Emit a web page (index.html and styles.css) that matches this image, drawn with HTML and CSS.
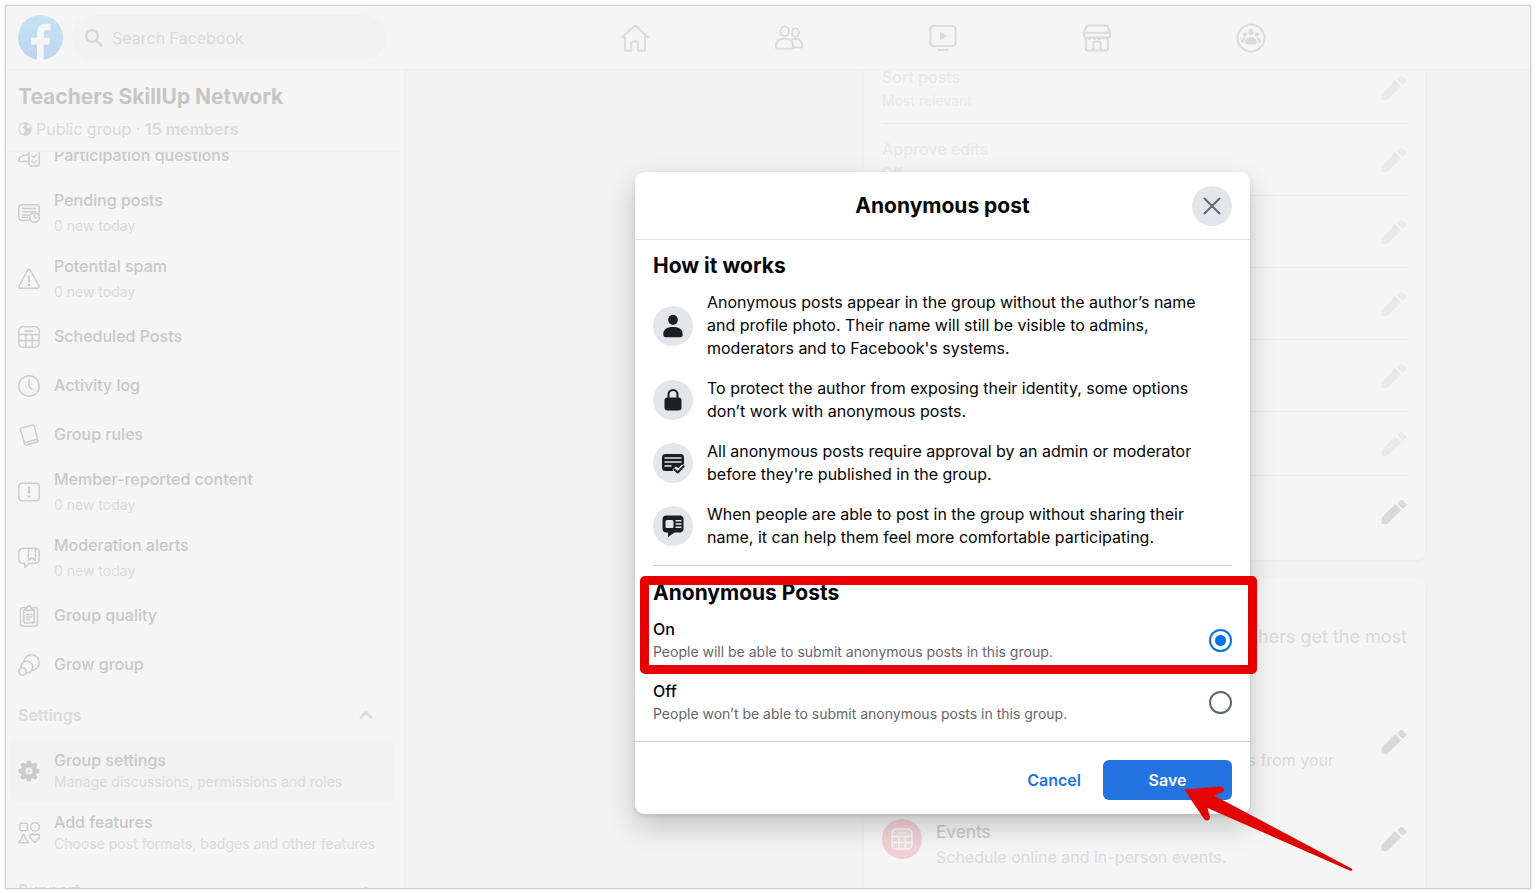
FILE: index.html
```html
<!DOCTYPE html>
<html lang="en">
<head>
  <meta charset="UTF-8">
  <meta name="viewport" content="width=device-width, initial-scale=1.0">
  <title>Group settings | Facebook</title>
  <link rel="stylesheet" href="styles.css">
</head>
<body>
  <!-- Shared icons -->
  <svg class="sprite" aria-hidden="true">
    <symbol id="pencil" viewBox="0 0 26 26">
      <path d="M.5 19.200 13.200 6a1.300 1.300 0 0 1 1.800 0l4.300 4.200a1.300 1.300 0 0 1 0 1.800L7 24.300c-.5.500-1 .7-1.700.7H1.500a1 1 0 0 1-1-1z"/>
      <path d="M17 3.500 19 1.400a2 2 0 0 1 2.800 0l3 3a2 2 0 0 1 0 2.800L22.700 9.300a1.200 1.200 0 0 1-1.700 0L17 5.200a1.200 1.200 0 0 1 0-1.700z"/>
    </symbol>
    <symbol id="chevron" viewBox="0 0 14 9">
      <path d="M2 7.300 7 2.500l5 4.800" fill="none" stroke="currentColor" stroke-width="2.800" stroke-linecap="round" stroke-linejoin="round"/>
    </symbol>
  </svg>

  <div class="window">
    <header class="topbar">
      <div class="brand">
        <a href="#" class="logo" aria-label="Facebook">
          <svg viewBox="0 0 45 45">
            <defs>
              <linearGradient id="fb" x1="0" y1="0" x2="0" y2="1">
                <stop offset="0" stop-color="#c5e4f4"/>
                <stop offset="1" stop-color="#c0d3f1"/>
              </linearGradient>
            </defs>
            <circle cx="22.500" cy="22.500" r="22.500" fill="url(#fb)"/>
            <path fill="#f5f5f5" d="M19 44.800V29.500h-6v-6.800h6v-4.500c0-6 3.500-9.500 9-9.500 1.700 0 3.200.1 4.600.4v5.800h-3c-3 0-3.800 1.600-3.800 3.500v4.300h6.400l-1.100 6.800h-5.300v15.300c-2.200.3-4.600.3-6.800 0z"/>
          </svg>
        </a>
        <label class="search">
          <svg viewBox="0 0 18 18"><circle cx="7" cy="7" r="5.800"/><path d="M11.500 11.500 16.500 16.500"/></svg>
          <input type="search" placeholder="Search Facebook" aria-label="Search Facebook">
        </label>
      </div>
      <nav class="tabs">
        <a href="#" aria-label="Home"><svg viewBox="0 0 28 28"><path d="M14 1.500 1 13h3v13a.8.8 0 0 0 .8.800h5.400V17.500h6.600v9.300h6.400a.8.8 0 0 0 .8-.800V13h3z"/></svg></a>
        <a href="#" aria-label="Friends"><svg viewBox="0 0 28 28"><ellipse cx="9.700" cy="7.300" rx="4.200" ry="4.900"/><ellipse cx="20.500" cy="8.500" rx="3.500" ry="4.200"/><path d="M1 22.500c0-5 3-8 8.500-8s8.700 3 8.700 8c0 1.500-.7 2.200-2 2.200H3c-1.300 0-2-.7-2-2.200zM17.500 23.500h7.800c1.200 0 1.900-.6 1.900-1.900 0-4.400-2.500-6.600-6.700-6.600-1.500 0-2.700.2-3.700.7"/></svg></a>
        <a href="#" aria-label="Watch"><svg viewBox="0 0 28 28"><rect x="1.500" y="2" width="25" height="20" rx="3"/><path d="M8.500 26h11"/><path class="solid" d="M11 7.800v8.400l7.500-4.200z"/></svg></a>
        <a href="#" aria-label="Marketplace"><svg viewBox="0 0 28 28"><path d="M4 1.500h20l3 6.500v3.500a2 2 0 0 1-2 2H3a2 2 0 0 1-2-2V8zM1 8.800h26M3 13.500v11.800c0 .8.500 1.200 1.200 1.200h19.600c.7 0 1.200-.4 1.200-1.200V13.500M10.500 26.500v-8c0-.7.4-1 1-1h5c.6 0 1 .3 1 1v8M4 13.500l2.500 1.500 2.500-1.500 2.500 1.500 2.500-1.500 2.500 1.500 2.500-1.500 2.500 1.500 2.500-1.500"/></svg></a>
        <a href="#" aria-label="Groups"><svg viewBox="0 0 28 28"><circle cx="14" cy="14" r="13.500"/><g class="solid"><ellipse cx="14" cy="8" rx="2.700" ry="3"/><circle cx="8" cy="10.300" r="2.100"/><circle cx="20" cy="10.300" r="2.100"/><path d="M8.500 18.500c0-3.600 2-5.600 5.500-5.600s5.500 2 5.500 5.600c0 1-.4 1.700-1.500 1.700h-8c-1.100 0-1.500-.7-1.500-1.700zM8.300 13.500c-3 0-4.300 1.500-4.300 3.700 0 .7.400 1.200 1.100 1.200h2c0-2 .3-3.500 1.200-4.900zM19.700 13.500c3 0 4.300 1.500 4.300 3.700 0 .7-.4 1.200-1.100 1.200h-2c0-2-.3-3.500-1.200-4.900z"/></g></svg></a>
      </nav>
    </header>

    <div class="content">
      <aside class="sidebar">
        <div class="group-head">
          <h1>Teachers SkillUp Network</h1>
          <p>
            <svg viewBox="0 0 14 14"><circle cx="7" cy="7" r="6.800"/><path fill="#f5f5f5" d="M4.500 1.500c1.500.3 2.500.8 2 2C6 4.700 4.500 4.500 4 6c1.500.3 3 .7 3 2.200S6 10.500 5.500 12C3 11.200 1.200 9 1.200 7c0-2 1.300-4.500 3.300-5.500zM9 3.500l2-1 1.500 2.500-2 1.500c-1.200-.3-2-1.500-1.500-3z"/></svg>
            <span>Public group · <strong>15 members</strong></span>
          </p>
        </div>
        <div class="menu">
          <a href="#" class="item first">
            <svg viewBox="0 0 22 22"><path d="M10.500 16.500H.8v-1C.8 11.800 4 9.700 10.500 9.700M3.500 6h7"/><rect x="11" y="5" width="10.200" height="16" rx="2.500"/><path d="m14 11 1.500 1.300 3-2.300M14 16.500l1.500 1.300 3-2.300"/></svg>
            <span>Participation questions</span>
          </a>
          <a href="#" class="item tall">
            <svg viewBox="0 0 22 22"><path d="M11 18.500H3.500a2.700 2.700 0 0 1-2.700-2.700V5.500a2.700 2.700 0 0 1 2.700-2.700h15a2.700 2.700 0 0 1 2.700 2.700V12M4.500 6.500h13M4.500 9.800h13M4.500 13h6M4.500 15.500h5"/><circle cx="16.500" cy="15.500" r="4.800"/><path d="M16.500 13v2.800h2"/></svg>
            <span>Pending posts<small>0 new today</small></span>
          </a>
          <a href="#" class="item tall">
            <svg viewBox="0 0 22 22"><path d="M9.800 2 1 18.200c-.6 1.100 0 2 1 2h18c1 0 1.600-.9 1-2L12.200 2c-.6-1-1.800-1-2.400 0z"/><path class="bang" d="M11 8v5.500"/><circle class="solid" cx="11" cy="17" r="1.300"/></svg>
            <span>Potential spam<small>0 new today</small></span>
          </a>
          <a href="#" class="item">
            <svg viewBox="0 0 22 22"><rect x=".8" y=".8" width="20.400" height="20.400" rx="4"/><path d="M7 5h8M1 8.500h20M1 14.500h20M7.800 8.500V21M14.200 8.500V21"/></svg>
            <span>Scheduled Posts</span>
          </a>
          <a href="#" class="item">
            <svg viewBox="0 0 22 22"><circle cx="11" cy="11" r="10.300"/><path d="M11 5v6.500l3 3"/></svg>
            <span>Activity log</span>
          </a>
          <a href="#" class="item">
            <svg viewBox="0 0 22 22"><path d="M3.500 4 14.500 1c1-.3 1.600.1 1.800 1l3.300 13.200L6.500 18.700 2.300 5.500C2 4.700 2.700 4.200 3.500 4zM5.500 16l.8 3.700c.3 1.200 1 1.600 2.200 1.300l11.800-3.200-.7-2.500"/></svg>
            <span>Group rules</span>
          </a>
          <a href="#" class="item tall">
            <svg viewBox="0 0 22 22"><rect x=".8" y="2.300" width="20.400" height="17.400" rx="3"/><path class="bang" d="M11 6.200v5.500"/><circle class="solid" cx="11" cy="15.500" r="1.300"/></svg>
            <span>Member-reported content<small>0 new today</small></span>
          </a>
          <a href="#" class="item tall">
            <svg viewBox="0 0 22 22"><path d="M4.500 1.300h13a3.700 3.700 0 0 1 3.700 3.700v7.500a3.700 3.700 0 0 1-3.700 3.700h-6L6.800 20.500v-4.300H4.500A3.700 3.700 0 0 1 .8 12.500V5a3.700 3.700 0 0 1 3.700-3.700z"/><path d="M10.500 1.500v11.800l3.500-2.300 3.500 2.300V1.500"/></svg>
            <span>Moderation alerts<small>0 new today</small></span>
          </a>
          <a href="#" class="item">
            <svg viewBox="0 0 22 22"><path d="M7.500 2.500H4.500a2 2 0 0 0-2 2v14.700a2 2 0 0 0 2 2h13a2 2 0 0 0 2-2V4.500a2 2 0 0 0-2-2h-3M7.500 4.800H5.800v13h10.400v-13h-1.700"/><path d="M7.500 5.500V3.300h1.700c.2-3.300 3.400-3.300 3.600 0h1.700v2.200zM8.200 9.500h5.600M8.200 12h5.600M8.200 14.500h3.500"/></svg>
            <span>Group quality</span>
          </a>
          <a href="#" class="item">
            <svg viewBox="0 0 22 22"><circle cx="4.500" cy="17.500" r="3.700"/><path d="M3 13.500c-.3-3.600 2.500-6.200 5.700-6.200 3.500 0 6 2.600 6 5.700 0 3.600-2.800 6.300-6.200 6M6 7.800C6.300 4 9.300.8 13.500.8c4.500 0 7.700 3.300 7.700 7.600s-3.200 7.700-7.700 8"/></svg>
            <span>Grow group</span>
          </a>
          <button type="button" class="section">Settings <svg><use href="#chevron"/></svg></button>
          <a href="#" class="item wide active">
            <svg viewBox="0 0 22 22"><path class="solid" fill-rule="evenodd" d="M9.300.5h3.400l.6 2.600 1.500.7 2.300-1.500 2.500 2.500-1.500 2.300.7 1.500 2.700.6v3.600l-2.700.6-.7 1.500 1.500 2.300-2.500 2.500-2.300-1.500-1.500.7-.6 2.600H9.300l-.6-2.600-1.500-.7-2.300 1.500-2.500-2.500 1.500-2.300-.7-1.500-2.700-.6V9.200l2.700-.6.700-1.500-1.500-2.300 2.500-2.500 2.300 1.500 1.500-.7zM11 7.500a3.500 3.500 0 1 0 0 7 3.500 3.500 0 0 0 0-7z"/><circle class="solid" cx="11" cy="11" r="1.300"/></svg>
            <span>Group settings<small>Manage discussions, permissions and roles</small></span>
          </a>
          <a href="#" class="item wide">
            <svg viewBox="0 0 22 22"><rect x="1.800" y="1.200" width="7.600" height="7.600" rx="1.500"/><circle cx="17" cy="5" r="4.300"/><path d="M5.500 12.500.8 20.800h9.500zM16.700 20.500l-4.300-4.200c-2.300-3 2-5.800 4.300-2.700 2.300-3.100 6.600-.3 4.300 2.700z"/></svg>
            <span>Add features<small>Choose post formats, badges and other features</small></span>
          </a>
          <button type="button" class="section">Support <svg><use href="#chevron"/></svg></button>
        </div>
      </aside>

      <main class="main">
        <section class="card scrolled">
          <div class="row">
            <div><h3>Sort posts</h3><p>Most relevant</p></div>
            <button type="button" class="edit" aria-label="Edit sort posts"><svg><use href="#pencil"/></svg></button>
          </div>
          <div class="row">
            <div><h3>Approve edits</h3><p>Off</p></div>
            <button type="button" class="edit" aria-label="Edit approve edits"><svg><use href="#pencil"/></svg></button>
          </div>
          <div class="row"><button type="button" class="edit" aria-label="Edit"><svg><use href="#pencil"/></svg></button></div>
          <div class="row"><button type="button" class="edit" aria-label="Edit"><svg><use href="#pencil"/></svg></button></div>
          <div class="row"><button type="button" class="edit" aria-label="Edit"><svg><use href="#pencil"/></svg></button></div>
          <div class="row short"><button type="button" class="edit" aria-label="Edit"><svg><use href="#pencil"/></svg></button></div>
          <div class="row last"><button type="button" class="edit strong" aria-label="Edit anonymous posting"><svg><use href="#pencil"/></svg></button></div>
        </section>

        <section class="card features">
          <p class="intro">others get the most</p>
          <div class="feature">
            <p class="tail">updates from your</p>
            <button type="button" class="edit strong" aria-label="Edit"><svg><use href="#pencil"/></svg></button>
          </div>
          <div class="feature">
            <span class="badge">
              <svg viewBox="0 0 22 22"><rect x="1" y="1" width="20" height="20" rx="4"/><path d="M7 5h8M1 8.500h20M1 14.500h20M7.800 8.500V21M14.200 8.500V21"/></svg>
            </span>
            <div><h3>Events</h3><p>Schedule online and in-person events.</p></div>
            <button type="button" class="edit strong" aria-label="Edit events"><svg><use href="#pencil"/></svg></button>
          </div>
        </section>
      </main>
    </div>

    <div class="overlay">
      <form class="modal" role="dialog" aria-labelledby="modal-title">
        <div class="modal-head">
          <h2 id="modal-title">Anonymous post</h2>
          <button type="button" class="close" aria-label="Close"><svg viewBox="0 0 18 18"><path d="M1.500 1.500l15 15M16.500 1.500l-15 15"/></svg></button>
        </div>
        <div class="modal-body">
          <h2>How it works</h2>
          <ul>
            <li>
              <span class="bubble"><svg viewBox="0 0 24 24"><ellipse cx="12" cy="5.800" rx="4.800" ry="5.100"/><path d="M2.300 20.500c0-5 3-7.500 9.700-7.500s9.700 2.500 9.700 7.500c0 1.900-.8 2.700-2.500 2.700H4.800c-1.700 0-2.500-.8-2.500-2.700z"/></svg></span>
              <p>Anonymous posts appear in the group without the author’s name and profile photo. Their name will still be visible to admins, moderators and to Facebook's systems.</p>
            </li>
            <li>
              <span class="bubble"><svg viewBox="0 0 24 24"><path d="M7.500 10V6.500a4.500 4.500 0 0 1 9 0V10" fill="none" stroke="#1c1e21" stroke-width="2"/><rect x="3.500" y="9.500" width="17" height="13" rx="3"/></svg></span>
              <p>To protect the author from exposing their identity, some options don’t work with anonymous posts.</p>
            </li>
            <li>
              <span class="bubble"><svg viewBox="0 0 24 24"><path d="M4.500 3h15A3.500 3.500 0 0 1 23 6.500V13l-5.500 4.500-2.500-2-3.500 3 1.500 1.500H4.500A3.500 3.500 0 0 1 1 16.500v-10A3.500 3.500 0 0 1 4.500 3z"/><path class="cut" d="M3.500 7h17M3.500 11h17M3.500 15h7"/><path class="halo" d="m13.500 18.500 3.200 3 6-6.300"/><path class="tick" d="m13.500 18.500 3.200 3 6-6.300"/></svg></span>
              <p>All anonymous posts require approval by an admin or moderator before they're published in the group.</p>
            </li>
            <li>
              <span class="bubble"><svg viewBox="0 0 24 24"><path d="M5.500 1.500h13a4 4 0 0 1 4 4v9a4 4 0 0 1-4 4h-5L7 23v-4.500H5.500a4 4 0 0 1-4-4v-9a4 4 0 0 1 4-4z"/><rect x="4.500" y="6" width="8" height="8" rx="1.500" fill="#e4e6eb"/><path class="cut" d="M14.500 6.700h6M14.500 10h6M14.500 13.300h6"/></svg></span>
              <p>When people are able to post in the group without sharing their name, it can help them feel more comfortable participating.</p>
            </li>
          </ul>
          <h2 class="options-title">Anonymous Posts</h2>
          <label class="option">
            <span>On<small>People will be able to submit anonymous posts in this group.</small></span>
            <input type="radio" name="anonymous" value="on" checked>
          </label>
          <label class="option">
            <span>Off<small>People won’t be able to submit anonymous posts in this group.</small></span>
            <input type="radio" name="anonymous" value="off">
          </label>
        </div>
        <div class="modal-foot">
          <button type="button" class="cancel">Cancel</button>
          <button type="submit" class="save">Save</button>
        </div>

        <!-- Highlight box and arrow drawn over the dialog -->
        <div class="highlight"></div>
        <svg class="arrow" viewBox="0 0 170 86">
          <defs>
            <linearGradient id="red" x1="0" y1="1" x2=".5" y2="0">
              <stop offset="0" stop-color="#c80000"/>
              <stop offset="1" stop-color="#f20505"/>
            </linearGradient>
          </defs>
          <path fill="url(#red)" d="M1 4.500 37 1.500c4-.2 5.500 5 1.500 6.500L31 10.500 168.500 83.500c1.500 1 .5 2.800-1.200 2.200L24.500 23l2.300 8.500c1 4-3.800 5.500-6 2z"/>
        </svg>
      </form>
    </div>
  </div>
</body>
</html>
```
FILE: styles.css
```css
* { box-sizing: border-box; }
body { margin: 0; padding: 5px; background: #fff; font-family: Inter, "Liberation Sans", sans-serif; font-size: 16px; color: #050505; }
h1, h2, h3, p, ul { margin: 0; padding: 0; }
a { color: inherit; text-decoration: none; }
button { font: inherit; border: 0; padding: 0; background: none; cursor: pointer; }
.sprite { display: none; }

.window { position: relative; display: flex; flex-direction: column; height: calc(100vh - 10px); border: 1px solid #d2d2d2; box-shadow: 0 0 2px #ccc; overflow: hidden; background: #f2f2f2; }

/* Top bar */
.topbar { display: flex; align-items: center; flex: none; height: 64px; padding-left: 12px; background: #f5f5f5; border-bottom: 1px solid #f0f0f0; }
.brand { display: flex; gap: 9px; width: 368px; }
.logo, .logo svg { display: block; width: 45px; height: 45px; }
.search { display: flex; align-items: center; gap: 7px; flex: 1; height: 45px; padding-left: 13px; border-radius: 23px; background: #f2f2f2; }
.search svg { width: 18px; height: 18px; fill: none; stroke: #d2d3d4; stroke-width: 2; stroke-linecap: round; }
.search input { flex: 1; min-width: 0; border: 0; outline: 0; background: none; font: inherit; }
.search input::placeholder { color: #d9dadb; opacity: 1; }
.tabs { display: flex; margin-left: auto; margin-right: 202px; }
.tabs a { display: flex; justify-content: center; width: 154px; }
.tabs svg { width: 28px; height: 28px; fill: none; stroke: #dadbdb; stroke-width: 2; stroke-linejoin: round; overflow: visible; }
.tabs .solid { fill: #d9dadb; stroke: none; }

.content { display: flex; flex: 1; min-height: 0; }

/* Sidebar */
.sidebar { display: flex; flex-direction: column; flex: none; width: 399px; background: #f5f5f5; border-right: 1px solid #efefef; color: #c8c8c8; }
.group-head { padding: 13px 12px 10px; border-bottom: 1px solid #f1f1f1; }
.group-head h1 { font-size: 21px; line-height: 28px; font-weight: 700; color: #c6c6c6; }
.group-head p { display: flex; align-items: center; gap: 4px; margin-top: 6px; font-size: 16px; line-height: 24px; color: #d9dadb; }
.group-head p svg { width: 14px; height: 14px; fill: #d2d3d4; }
.group-head strong { font-weight: 600; }
.menu { display: flex; flex-direction: column; flex: 1; min-height: 0; padding: 0 9px 0 3px; overflow: hidden; }
.item { display: flex; align-items: center; gap: 14px; flex: none; height: 49px; padding: 0 9px; border-radius: 8px; font-size: 16px; font-weight: 500; line-height: 25px; }
.item.first { margin-top: -21px; }
.item.tall { height: 66px; }
.item.wide { height: 62px; line-height: 22px; }
.item.active { background: #f2f2f2; }
.item svg { flex: none; width: 22px; height: 22px; fill: none; stroke: #cdcdcd; stroke-width: 1.5; stroke-linecap: round; stroke-linejoin: round; }
.item .solid { fill: #cbcbcb; stroke: none; }
.item .bang { stroke-width: 2; }
.item small { display: block; font-size: 14px; font-weight: 400; color: #dadbdb; }
.section { display: flex; align-items: center; justify-content: space-between; flex: none; height: 51px; padding: 0 22px 0 9px; font-size: 16px; font-weight: 600; color: #dadbdb; }
.section svg { width: 14px; height: 9px; }

/* Settings cards */
.main { display: flex; flex-direction: column; align-items: flex-end; gap: 18px; flex: 1; padding-right: 105px; overflow: hidden; color: #d9dadb; }
.card { flex: none; width: 561px; padding: 0 18px 12px; border-radius: 8px; background: #f5f5f5; box-shadow: 0 1px 2px #ebebeb; }
.card.scrolled { margin-top: -18px; }
.card h3 { font-size: 16px; line-height: 23px; font-weight: 500; }
.row { display: flex; align-items: center; height: 72px; border-bottom: 1px solid #ebebeb; color: #e8e9e9; }
.row div { padding-top: 3px; }
.row p { font-size: 14px; line-height: 23px; }
.row.short { height: 64px; }
.row.last { border-bottom: 0; }
.edit { margin-left: auto; color: #e8e9ea; }
.edit.strong { color: #d8d9da; }
.edit svg { display: block; width: 26px; height: 26px; fill: currentColor; }
.features { height: 330px; }
.intro { padding: 47px 0 56px; font-size: 18px; line-height: 24px; text-align: right; }
.feature { display: flex; align-items: center; gap: 14px; height: 97px; margin-top: -12px; margin-bottom: 12px; }
.feature div { padding-top: 12px; }
.feature h3 { font-size: 17px; line-height: 25px; color: #cbcbcb; }
.feature p { font-size: 16px; line-height: 25px; }
.feature .tail { flex: 1; padding: 37px 33px 0 0; text-align: right; }
.badge { display: flex; align-items: center; justify-content: center; width: 40px; height: 40px; border-radius: 50%; background: #f1cfd5; }
.badge svg { width: 22px; height: 22px; fill: none; stroke: #f5f5f5; stroke-width: 1.5; }
.badge rect { fill: #f3dce0; }

/* Dialog */
.overlay { position: absolute; inset: 0; display: flex; justify-content: center; align-items: flex-start; padding: 166px 0 0 349px; }
.modal { position: relative; width: 615px; border-radius: 9px; background: #fff; box-shadow: 0 12px 28px rgba(0,0,0,.2), 0 2px 4px rgba(0,0,0,.1); }
.modal h2 { font-size: 21px; line-height: 28px; font-weight: 700; color: #050505; }
.modal-head { display: flex; align-items: center; height: 68px; padding: 0 18px 0 58px; border-bottom: 1px solid #e2e3e5; }
.modal-head h2 { flex: 1; text-align: center; }
.close { display: flex; align-items: center; justify-content: center; width: 40px; height: 40px; border-radius: 50%; background: #e4e6eb; }
.close svg { width: 18px; height: 18px; fill: none; stroke: #606770; stroke-width: 2; stroke-linecap: round; }
.modal-body { padding: 12px 18px 8px; }
.modal-body ul { display: flex; flex-direction: column; gap: 17px; padding: 11px 0 16px; border-bottom: 1px solid #ced0d4; list-style: none; }
.modal-body li { display: flex; align-items: center; gap: 14px; padding-right: 24px; font-size: 16px; line-height: 23px; }
.bubble { display: flex; align-items: center; justify-content: center; flex: none; width: 40px; height: 40px; border-radius: 50%; background: #e4e6eb; }
.bubble svg { width: 24px; height: 24px; fill: #1c1e21; }
.bubble .cut { fill: none; stroke: #e4e6eb; stroke-width: 1.5; }
.bubble .halo { fill: none; stroke: #e4e6eb; stroke-width: 5; }
.bubble .tick { fill: none; stroke: #1c1e21; stroke-width: 2; stroke-linecap: round; stroke-linejoin: round; }
.modal .options-title { margin-top: 13px; }
.option { display: flex; align-items: center; justify-content: space-between; height: 62px; font-size: 16px; font-weight: 500; line-height: 23px; }
.options-title + .option { margin-top: 2px; }
.option small { display: block; font-size: 14px; font-weight: 400; line-height: 22px; color: #65676b; }
.option input { appearance: none; width: 23px; height: 23px; margin: 0; border: 2px solid #606770; border-radius: 50%; }
.option input:checked { border-color: #0571ed; background: radial-gradient(circle, #0571ed 5px, #fff 6px); }
.modal-foot { display: flex; justify-content: flex-end; gap: 22px; padding: 18px 18px 14px; border-top: 1px solid #ced0d4; font-weight: 600; }
.cancel { color: #1b74e4; }
.save { width: 129px; height: 40px; border-radius: 6px; background: #2374e1; color: #fff; }
.highlight { position: absolute; left: 5px; right: -7px; top: 404px; height: 98px; border: 9px solid #e60000; border-radius: 5px; pointer-events: none; }
.arrow { position: absolute; left: 548px; top: 613px; width: 170px; height: 86px; pointer-events: none; }
```
